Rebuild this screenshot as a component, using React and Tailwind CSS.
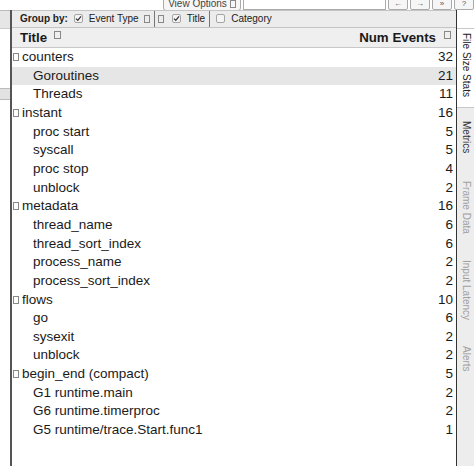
import React from "react";

const groups = [
  { name: "counters", count: 32, children: [["Goroutines", 21], ["Threads", 11]] },
  { name: "instant", count: 16, children: [["proc start", 5], ["syscall", 5], ["proc stop", 4], ["unblock", 2]] },
  {
    name: "metadata",
    count: 16,
    children: [["thread_name", 6], ["thread_sort_index", 6], ["process_name", 2], ["process_sort_index", 2]],
  },
  { name: "flows", count: 10, children: [["go", 6], ["sysexit", 2], ["unblock", 2]] },
  {
    name: "begin_end (compact)",
    count: 5,
    children: [["G1 runtime.main", 2], ["G6 runtime.timerproc", 2], ["G5 runtime/trace.Start.func1", 1]],
  },
];

const tabs = [
  { label: "Metrics", h: "h-[60px]", color: "text-[#333]" },
  { label: "Frame Data", h: "h-[79px]", color: "text-[#a0a0a0]" },
  { label: "Input Latency", h: "h-[86px]", color: "text-[#a0a0a0]" },
  { label: "Alerts", h: "h-[52px]", color: "text-[#a0a0a0]" },
];

// missing-glyph box used all over the original ui
function Tofu({ className = "" }) {
  return <span className={`inline-block w-[6px] h-[8px] border border-[#888] ${className}`} />;
}

function Check({ checked }) {
  return (
    <span className="inline-flex items-center justify-center w-[9px] h-[9px] rounded-[2px] border border-[#a5a5a5] bg-[#f4f4f4]">
      {checked && (
        <svg width="7" height="7" viewBox="0 0 7 7">
          <path d="M1 3.6 L2.8 5.4 L6 1.4" fill="none" stroke="#333" strokeWidth="1.3" />
        </svg>
      )}
    </span>
  );
}

function Row({ label, count, group, highlight }) {
  return (
    <div
      className={`flex items-center h-[18.65px] pr-[3px] ${highlight ? "bg-[#e6e6e6]" : ""} ${
        group ? "pl-[1px]" : "pl-[21px]"
      }`}
    >
      {group && <Tofu className="mr-[3px] h-[7px]" />}
      <span className="flex-1">{label}</span>
      <span>{count}</span>
    </div>
  );
}

export default function App() {
  return (
    <div className="w-[474px] h-[468px] bg-white overflow-hidden text-[#1a1a1a] font-['Liberation_Sans',Arial,sans-serif]">
      {/* top bar, cut off at the top */}
      <div className="flex items-end h-[10px] text-[10px] leading-none">
        <div className="ml-[163px] w-[78px] h-[14px] -mb-[1px] flex items-center justify-center gap-[3px] border border-[#aaa] rounded-b-[3px] bg-[#f6f6f6] text-[#444]">
          View Options
          <Tofu className="h-[7px] w-[5px]" />
        </div>
        <div className="ml-[2px] w-[143px] h-[14px] border border-[#aaa] bg-white" />
        {["←", "→", "»", "?"].map((b) => (
          <div
            key={b}
            className="ml-[2px] w-[20px] h-[14px] flex items-end justify-center pb-[1px] border border-[#aaa] rounded-b-[2px] bg-[#f6f6f6] text-[8px] text-[#555]"
          >
            {b}
          </div>
        ))}
      </div>

      <div className="flex h-[456px]">
        {/* edge of the panel behind */}
        <div className="w-[12px] flex flex-col border-r-2 border-[#555] bg-[#f4f4f4]">
          <div className="h-[18px] border-t border-[#bbb] bg-[#e6e6e6]" />
          <div className="h-[60px] border-t border-[#ccc] bg-white" />
          <div className="h-[12px] border-y border-[#bbb] bg-[#e2e2e2]" />
          <div className="flex-1 bg-white" />
        </div>

        {/* table panel */}
        <div className="flex-1 flex flex-col">
          <div className="flex items-center h-[18px] pl-[8px] bg-[#ececec] border-y border-[#c4c4c4] text-[10px] leading-none text-[#222]">
            <span className="font-bold">Group by:</span>
            <span className="ml-[6px]">
              <Check checked />
            </span>
            <span className="ml-[6px]">Event Type</span>
            <Tofu className="ml-[5px] h-[7px] w-[5px]" />
            <span className="ml-[4px] self-stretch w-px bg-[#777]" />
            <Tofu className="ml-[3px] h-[7px] w-[5px]" />
            <span className="ml-[8px]">
              <Check checked />
            </span>
            <span className="ml-[6px]">Title</span>
            <span className="ml-[4px] self-stretch w-px bg-[#777]" />
            <span className="ml-[6px]">
              <Check />
            </span>
            <span className="ml-[6px]">Category</span>
          </div>

          <div className="flex items-center h-[20px] pl-[8px] pr-[5px] bg-[#efefef] border-b border-[#c8c8c8] text-[13.3px] font-bold">
            <span>Title</span>
            <Tofu className="ml-[7px] -mt-[5px] h-[8px] w-[7px]" />
            <span className="flex-1" />
            <span>Num Events</span>
            <Tofu className="ml-[8px] -mt-[5px] h-[8px] w-[7px]" />
          </div>

          <div className="text-[13.5px]">
            {groups.map((g) => (
              <div key={g.name}>
                <Row label={g.name} count={g.count} group />
                {g.children.map(([label, count]) => (
                  <Row key={label} label={label} count={count} highlight={label === "Goroutines"} />
                ))}
              </div>
            ))}
          </div>
        </div>

        {/* side tabs */}
        <div className="w-[18px] flex flex-col border-l border-[#333] bg-[#ededed] text-[10px] leading-none">
          <div className="h-[18px] bg-white" />
          <div className="h-[80px] pt-[4px] flex justify-center bg-white border-y border-[#c8c8c8] text-[#222]">
            <span className="[writing-mode:vertical-rl]">File Size Stats</span>
          </div>
          {tabs.map((t) => (
            <div key={t.label} className={`${t.h} pt-[13px] flex justify-center ${t.color}`}>
              <span className="[writing-mode:vertical-rl]">{t.label}</span>
            </div>
          ))}
        </div>
      </div>
    </div>
  );
}
